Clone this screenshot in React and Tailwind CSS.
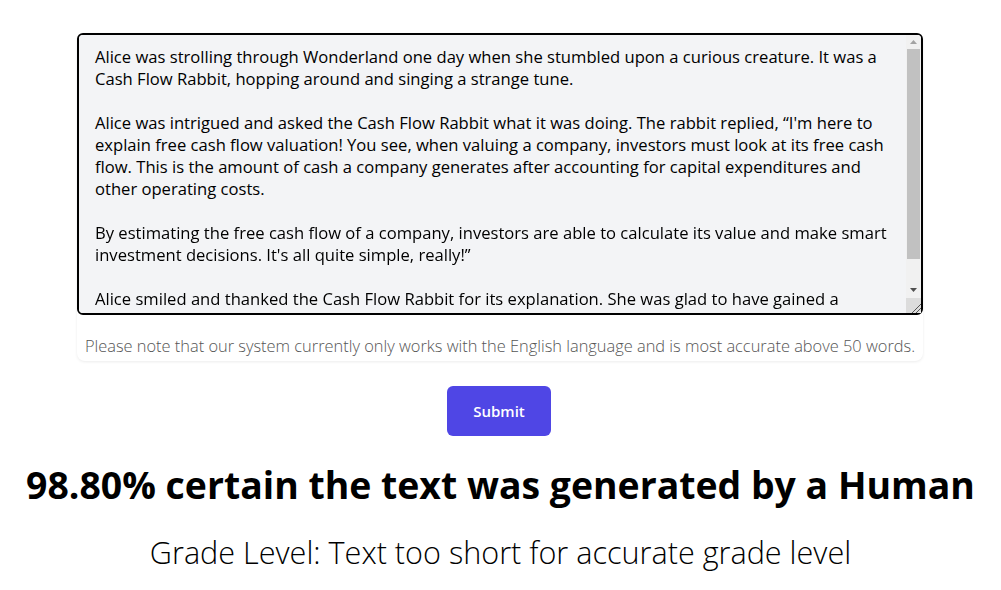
import React, { useEffect, useRef } from "react";

const TEXT =
  "Alice was strolling through Wonderland one day when she stumbled upon a curious creature. It was a Cash Flow Rabbit, hopping around and singing a strange tune.\n\nAlice was intrigued and asked the Cash Flow Rabbit what it was doing. The rabbit replied, \u201CI'm here to explain free cash flow valuation! You see, when valuing a company, investors must look at its free cash flow. This is the amount of cash a company generates after accounting for capital expenditures and other operating costs.\n\nBy estimating the free cash flow of a company, investors are able to calculate its value and make smart investment decisions. It's all quite simple, really!\u201D\n\nAlice smiled and thanked the Cash Flow Rabbit for its explanation. She was glad to have gained a better understanding of free cash flow valuation, and she continued on her way through Wonderland, humming the rabbit's strange tune.";

function FakeScrollbar() {
  return (
    <div className="absolute top-[2px] bottom-[2px] right-[2px] w-[15px] flex flex-col bg-[#f1f1f1] rounded-tr-[4px] pointer-events-none">
      <div className="h-[14px] flex items-center justify-center">
        <svg width="7" height="4" viewBox="0 0 7 4">
          <polygon points="0,4 7,4 3.5,0" fill="#a3a3a3" />
        </svg>
      </div>
      <div className="h-[210px] mx-[1px] bg-[#c1c1c1]" />
      <div className="flex-1" />
      <div className="h-[16px] flex items-center justify-center">
        <svg width="7" height="4" viewBox="0 0 7 4">
          <polygon points="0,0 7,0 3.5,4" fill="#505050" />
        </svg>
      </div>
      <div className="h-[15px] bg-[#dcdcdc] rounded-br-[4px] flex items-end justify-end">
        <svg width="12" height="12" viewBox="0 0 12 12">
          <line x1="3" y1="12" x2="12" y2="3" stroke="#555" strokeWidth="1" />
          <line x1="7" y1="12" x2="12" y2="7" stroke="#555" strokeWidth="1" />
        </svg>
      </div>
    </div>
  );
}

export default function App() {
  const ref = useRef(null);
  useEffect(() => {
    const el = ref.current;
    if (el) {
      const idx = TEXT.indexOf("costs.\n") + 7;
      el.focus();
      el.setSelectionRange(idx, idx);
      el.scrollTop = 0;
    }
  }, []);
  return (
    <div className="min-h-screen bg-white flex flex-col items-center pt-[33px] font-['Open_Sans',sans-serif]">
      <div className="w-[846px] mr-[1px] bg-white rounded-lg shadow-[0_1px_3px_rgba(0,0,0,0.08)]">
        <div className="relative">
          <textarea
            ref={ref}
            defaultValue={TEXT}
            className="block w-full h-[282px] border-2 border-black rounded-md bg-[#f3f4f6] pl-4 pr-[31px] pt-[11px] pb-[9px] text-[16.6px] leading-[22px] text-black outline-none resize-none [scrollbar-width:none] [&::-webkit-scrollbar]:hidden"
          />
          <FakeScrollbar />
        </div>
        <p className="text-center text-[16.4px] font-light text-[#555] pt-[20px] pb-[4px] leading-[22px]">
          Please note that our system currently only works with the English language and is most accurate above 50 words.
        </p>
      </div>
      <button className="mt-[25px] mr-[3px] w-[104px] h-[50px] rounded-md bg-[#4f46e5] text-white text-[15px] font-semibold">
        Submit
      </button>
      <h1 className="mt-[27px] text-[37.4px] font-bold text-black leading-[44px]">
        98.80% certain the text was generated by a Human
      </h1>
      <p className="mt-[25px] text-[30.6px] font-light text-black leading-[40px]">
        Grade Level: Text too short for accurate grade level
      </p>
    </div>
  );
}
